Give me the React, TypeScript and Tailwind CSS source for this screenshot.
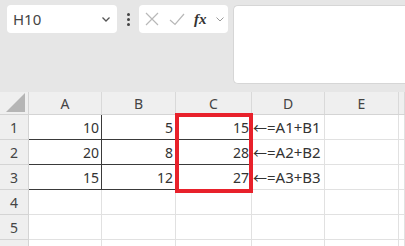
import React from 'react';

const cols = [
  { name: 'A', w: 'w-[73px]' },
  { name: 'B', w: 'w-[74px]' },
  { name: 'C', w: 'w-[76px]' },
  { name: 'D', w: 'w-[73px]' },
  { name: 'E', w: 'w-[74px]' },
  { name: '', w: 'flex-1' },
];

const rows: string[][] = [
  ['10', '5', '15', '=A1+B1'],
  ['20', '8', '28', '=A2+B2'],
  ['15', '12', '27', '=A3+B3'],
  [],
  [],
  [],
];

const App = () => {
  return (
    <div className="w-[405px] h-[246px] overflow-hidden bg-white text-[#333] font-['Noto_Sans','Noto_Sans_CJK_JP',sans-serif]">
      {/* toolbar */}
      <div className="h-[92px] bg-[#e6e6e6] flex items-start pt-[5px] pl-[7px]">
        <div className="w-[110px] h-[28px] bg-white rounded-[4px] flex items-center justify-between pl-[6px] pr-[5px]">
          <span className="text-[15px] text-[#444]">H10</span>
          <svg width="12" height="12" viewBox="0 0 12 12" fill="none" stroke="#555" strokeWidth="1.3">
            <path d="M2.5 4.5 L6 8 L9.5 4.5" />
          </svg>
        </div>
        <div className="w-[22px] h-[28px] flex flex-col items-center justify-center gap-[2px]">
          <span className="w-[3px] h-[3px] rounded-full bg-[#444]" />
          <span className="w-[3px] h-[3px] rounded-full bg-[#444]" />
          <span className="w-[3px] h-[3px] rounded-full bg-[#444]" />
        </div>
        <div className="w-[89px] h-[28px] bg-white rounded-[4px] flex items-center pl-[5px] gap-[8px]">
          <svg width="16" height="16" viewBox="0 0 16 16" fill="none" stroke="#b8b8b8" strokeWidth="1.2">
            <path d="M2 2 L14 14 M14 2 L2 14" />
          </svg>
          <svg width="18" height="16" viewBox="0 0 18 16" fill="none" stroke="#b8b8b8" strokeWidth="1.2">
            <path d="M2 9 L7 13.5 L16 3" />
          </svg>
          <span className="italic font-bold text-[15px] text-[#333] font-['Liberation_Serif',serif] leading-none">fx</span>
          <svg width="10" height="10" viewBox="0 0 10 10" fill="none" stroke="#999" strokeWidth="1">
            <path d="M1.5 3.5 L5 7 L8.5 3.5" />
          </svg>
        </div>
        <div className="flex-1 h-[79px] ml-[5px] bg-white rounded-l-[5px] border border-r-0 border-[#d6d6d6]" />
      </div>

      {/* grid */}
      <div className="relative">
        <div className="flex h-[23px] bg-[#efefef] border-b border-[#d4d4d4]">
          <div className="w-[29px] border-r border-[#d4d4d4] flex items-end justify-end pr-[3px] pb-[2px]">
            <svg width="19" height="19" viewBox="0 0 19 19">
              <polygon points="19,0 19,19 0,19" fill="#b5b5b5" />
            </svg>
          </div>
          {cols.map((c, i) => (
            <div key={i} className={`${c.w} border-r border-[#d9d9d9] flex items-center justify-center text-[14px] text-[#444]`}>
              {c.name}
            </div>
          ))}
        </div>
        {rows.map((r, ri) => {
          const dark = ri < 3;
          return (
            <div key={ri} className="flex h-[25px]">
              <div className="w-[29px] bg-[#efefef] border-r border-b border-[#d4d4d4] flex items-center justify-center text-[14px] text-[#444]">
                {ri < 5 ? ri + 1 : ''}
              </div>
              {cols.map((c, ci) => {
                const inTable = dark && ci < 3;
                const val = r[ci] ?? '';
                return (
                  <div
                    key={ci}
                    className={`${c.w} border-b border-r ${inTable ? 'border-[#3a3a3a]' : 'border-[#e1e1e1]'} flex items-center text-[14px] whitespace-nowrap ${ci < 3 ? 'justify-end pr-[2px]' : 'justify-start pl-[1px]'}`}
                  >
                    {ci === 3 && val ? (
                      <>
                        <span className="font-['Noto_Sans_CJK_JP',sans-serif] text-[14px]">←</span>
                        <span className="text-[15px]">{val}</span>
                      </>
                    ) : (
                      val
                    )}
                  </div>
                );
              })}
            </div>
          );
        })}
        {/* red highlight over C1:C3 */}
        <div className="absolute left-[175px] top-[21px] w-[78px] h-[80px] border-[4px] border-[#e8212b] pointer-events-none" />
      </div>
    </div>
  );
};

export default App;
